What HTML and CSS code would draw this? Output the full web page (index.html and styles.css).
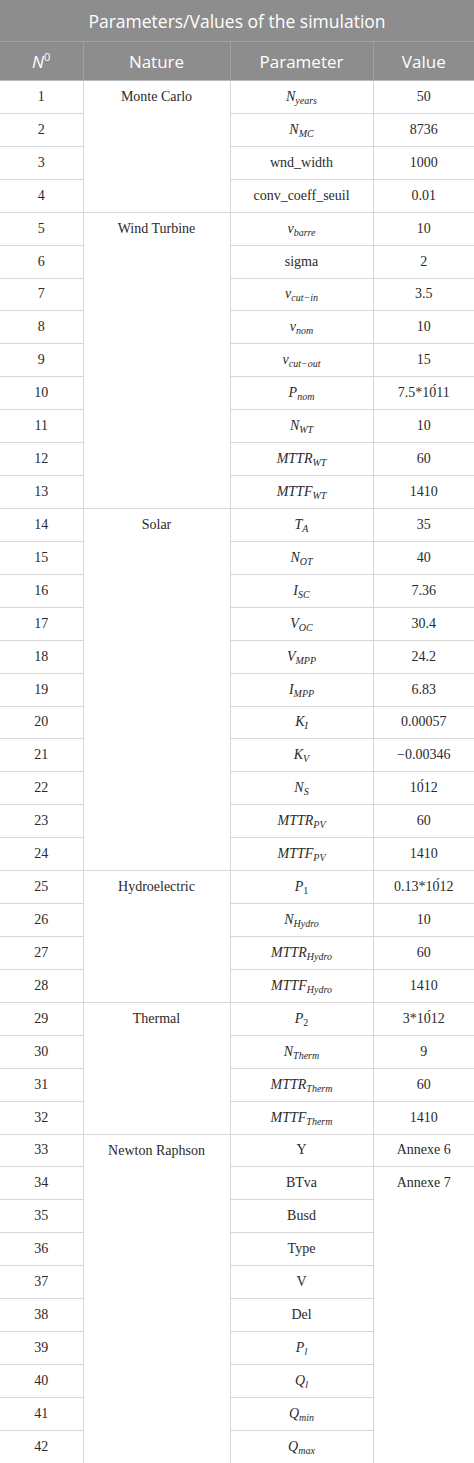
FILE: index.html
```html
<!DOCTYPE html>
<html>
<head>
<meta charset="utf-8">
<link rel="stylesheet" href="styles.css">
</head>
<body>
<table class="tbl">
  <colgroup>
    <col class="c1"><col class="c2"><col class="c3"><col class="c4">
  </colgroup>
  <thead>
    <tr class="title-row"><th colspan="4">Parameters/Values of the simulation</th></tr>
    <tr class="head-row">
      <th><i>N</i><sup>0</sup></th>
      <th>Nature</th>
      <th>Parameter</th>
      <th>Value</th>
    </tr>
  </thead>
  <tbody>
    <tr><td>1</td><td class="nat" rowspan="4">Monte Carlo</td><td><i>N</i><sub class="s">years</sub></td><td>50</td></tr>
    <tr><td>2</td><td><i>N</i><sub class="s">MC</sub></td><td>8736</td></tr>
    <tr><td>3</td><td>wnd_width</td><td>1000</td></tr>
    <tr><td>4</td><td>conv_coeff_seuil</td><td>0.01</td></tr>

    <tr><td>5</td><td class="nat" rowspan="9">Wind Turbine</td><td><i>v</i><sub class="s">barre</sub></td><td>10</td></tr>
    <tr><td>6</td><td>sigma</td><td>2</td></tr>
    <tr><td>7</td><td><i>v</i><sub class="s">cut−in</sub></td><td>3.5</td></tr>
    <tr><td>8</td><td><i>v</i><sub class="s">nom</sub></td><td>10</td></tr>
    <tr><td>9</td><td><i>v</i><sub class="s">cut−out</sub></td><td>15</td></tr>
    <tr><td>10</td><td><i>P</i><sub class="s">nom</sub></td><td>7.5*10&#x0301;11</td></tr>
    <tr><td>11</td><td><i>N</i><sub class="s">WT</sub></td><td>10</td></tr>
    <tr><td>12</td><td><i>MTTR</i><sub class="s">WT</sub></td><td>60</td></tr>
    <tr><td>13</td><td><i>MTTF</i><sub class="s">WT</sub></td><td>1410</td></tr>

    <tr><td>14</td><td class="nat" rowspan="11">Solar</td><td><i>T</i><sub class="s">A</sub></td><td>35</td></tr>
    <tr><td>15</td><td><i>N</i><sub class="s">OT</sub></td><td>40</td></tr>
    <tr><td>16</td><td><i>I</i><sub class="s">SC</sub></td><td>7.36</td></tr>
    <tr><td>17</td><td><i>V</i><sub class="s">OC</sub></td><td>30.4</td></tr>
    <tr><td>18</td><td><i>V</i><sub class="s">MPP</sub></td><td>24.2</td></tr>
    <tr><td>19</td><td><i>I</i><sub class="s">MPP</sub></td><td>6.83</td></tr>
    <tr><td>20</td><td><i>K</i><sub class="s">I</sub></td><td>0.00057</td></tr>
    <tr><td>21</td><td><i>K</i><sub class="s">V</sub></td><td>−0.00346</td></tr>
    <tr><td>22</td><td><i>N</i><sub class="s">S</sub></td><td>10&#x0301;12</td></tr>
    <tr><td>23</td><td><i>MTTR</i><sub class="s">PV</sub></td><td>60</td></tr>
    <tr><td>24</td><td><i>MTTF</i><sub class="s">PV</sub></td><td>1410</td></tr>

    <tr><td>25</td><td class="nat" rowspan="4">Hydroelectric</td><td><i>P</i><sub class="n">1</sub></td><td>0.13*10&#x0301;12</td></tr>
    <tr><td>26</td><td><i>N</i><sub class="s">Hydro</sub></td><td>10</td></tr>
    <tr><td>27</td><td><i>MTTR</i><sub class="s">Hydro</sub></td><td>60</td></tr>
    <tr><td>28</td><td><i>MTTF</i><sub class="s">Hydro</sub></td><td>1410</td></tr>

    <tr><td>29</td><td class="nat" rowspan="4">Thermal</td><td><i>P</i><sub class="n">2</sub></td><td>3*10&#x0301;12</td></tr>
    <tr><td>30</td><td><i>N</i><sub class="s">Therm</sub></td><td>9</td></tr>
    <tr><td>31</td><td><i>MTTR</i><sub class="s">Therm</sub></td><td>60</td></tr>
    <tr><td>32</td><td><i>MTTF</i><sub class="s">Therm</sub></td><td>1410</td></tr>

    <tr><td>33</td><td class="nat" rowspan="10">Newton Raphson</td><td>Y</td><td>Annexe 6</td></tr>
    <tr><td>34</td><td>BTva</td><td class="nat" rowspan="9">Annexe 7</td></tr>
    <tr><td>35</td><td>Busd</td></tr>
    <tr><td>36</td><td>Type</td></tr>
    <tr><td>37</td><td>V</td></tr>
    <tr><td>38</td><td>Del</td></tr>
    <tr><td>39</td><td><i>P</i><sub class="s">l</sub></td></tr>
    <tr><td>40</td><td><i>Q</i><sub class="s">l</sub></td></tr>
    <tr><td>41</td><td><i>Q</i><sub class="s">min</sub></td></tr>
    <tr><td>42</td><td><i>Q</i><sub class="s">max</sub></td></tr>
  </tbody>
</table>
</body>
</html>
```

FILE: styles.css
```css
html, body {
  margin: 0;
  padding: 0;
  background: #ffffff;
}

.tbl {
  width: 474px;
  border-collapse: collapse;
  table-layout: fixed;
}

.c1 { width: 83px; }
.c2 { width: 147px; }
.c3 { width: 143px; }
.c4 { width: 101px; }

.title-row th {
  height: 41px;
  padding: 0;
  background: #8d8d8d;
  color: #ffffff;
  font-family: "Open Sans", "Noto Sans", sans-serif;
  font-weight: 400;
  font-size: 17.5px;
  text-align: center;
  border-bottom: 1px solid #a4a4a4;
}

.head-row th {
  height: 38px;
  padding: 0;
  background: #8d8d8d;
  color: #ffffff;
  font-family: "Open Sans", "Noto Sans", sans-serif;
  font-weight: 400;
  font-size: 17px;
  text-align: center;
  border-left: 1px solid #a0a0a0;
  border-bottom: 1px solid #b8b8b8;
}

.head-row th:first-child {
  border-left: none;
}

.head-row sup {
  font-size: 11px;
  vertical-align: 7px;
  line-height: 0;
}

.tbl tbody tr {
  height: 32.93px;
}

.tbl td {
  padding: 0 4px;
  font-family: "Liberation Serif", "Times New Roman", serif;
  font-size: 14px;
  color: #2a2a2a;
  text-align: center;
  vertical-align: middle;
  border-bottom: 1px solid #d6d6d6;
  border-left: 1px solid #d6d6d6;
  white-space: nowrap;
}

.tbl td:first-child {
  border-left: none;
}

.tbl td.nat {
  vertical-align: top;
  padding-top: 8px;
}

.tbl td i {
  font-style: italic;
}

.tbl sub {
  line-height: 0;
  vertical-align: -3px;
}

.tbl sub.s {
  font-size: 10px;
  font-style: italic;
}

.tbl sub.n {
  font-size: 10px;
  font-style: normal;
}
```
